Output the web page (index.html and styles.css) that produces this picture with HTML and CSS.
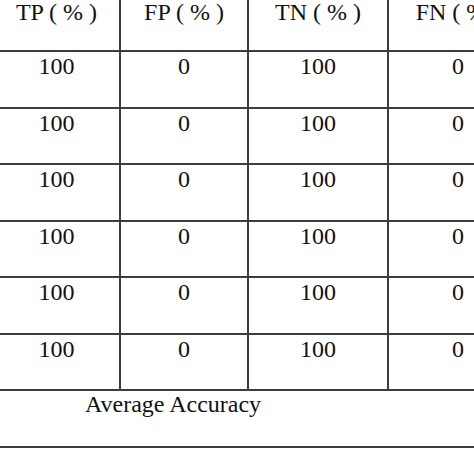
FILE: index.html
```html
<!DOCTYPE html>
<html>
<head>
<meta charset="utf-8">
<link rel="stylesheet" href="styles.css">
</head>
<body>
<div class="table">
  <div class="row head">
    <div class="cell c1">TP ( % )</div>
    <div class="cell">FP ( % )</div>
    <div class="cell">TN ( % )</div>
    <div class="cell last">FN ( % )</div>
  </div>
  <div class="row">
    <div class="cell c1">100</div><div class="cell">0</div><div class="cell">100</div><div class="cell last">0</div>
  </div>
  <div class="row">
    <div class="cell c1">100</div><div class="cell">0</div><div class="cell">100</div><div class="cell last">0</div>
  </div>
  <div class="row">
    <div class="cell c1">100</div><div class="cell">0</div><div class="cell">100</div><div class="cell last">0</div>
  </div>
  <div class="row">
    <div class="cell c1">100</div><div class="cell">0</div><div class="cell">100</div><div class="cell last">0</div>
  </div>
  <div class="row">
    <div class="cell c1">100</div><div class="cell">0</div><div class="cell">100</div><div class="cell last">0</div>
  </div>
  <div class="row">
    <div class="cell c1">100</div><div class="cell">0</div><div class="cell">100</div><div class="cell last">0</div>
  </div>
  <div class="row avg">
    <div class="cell span">Average Accuracy</div>
  </div>
</div>
</body>
</html>
```
FILE: styles.css
```css
html, body {
  margin: 0;
  padding: 0;
  background: #ffffff;
  overflow: hidden;
  width: 474px;
  height: 474px;
}

.table {
  width: 527px;
  font-family: "Liberation Serif", "Times New Roman", serif;
  font-size: 24px;
  line-height: 24px;
  color: #111111;
}

.row {
  display: grid;
  grid-template-columns: 121px 128px 140px 138px;
  height: 56.5px;
  box-sizing: border-box;
  border-bottom: 2px solid #3c3c3c;
}

.row.head {
  height: 52px;
}

.cell {
  box-sizing: border-box;
  border-right: 2px solid #3c3c3c;
  text-align: center;
  padding-top: 2px;
}

.head .cell {
  padding-top: 0;
}

.cell.c1 {
  padding-right: 6px;
}

.cell.last {
  border-right: none;
}

.cell.span {
  grid-column: 1 / -1;
  border-right: none;
  text-align: left;
  padding-left: 85px;
  padding-top: 1px;
}
```
